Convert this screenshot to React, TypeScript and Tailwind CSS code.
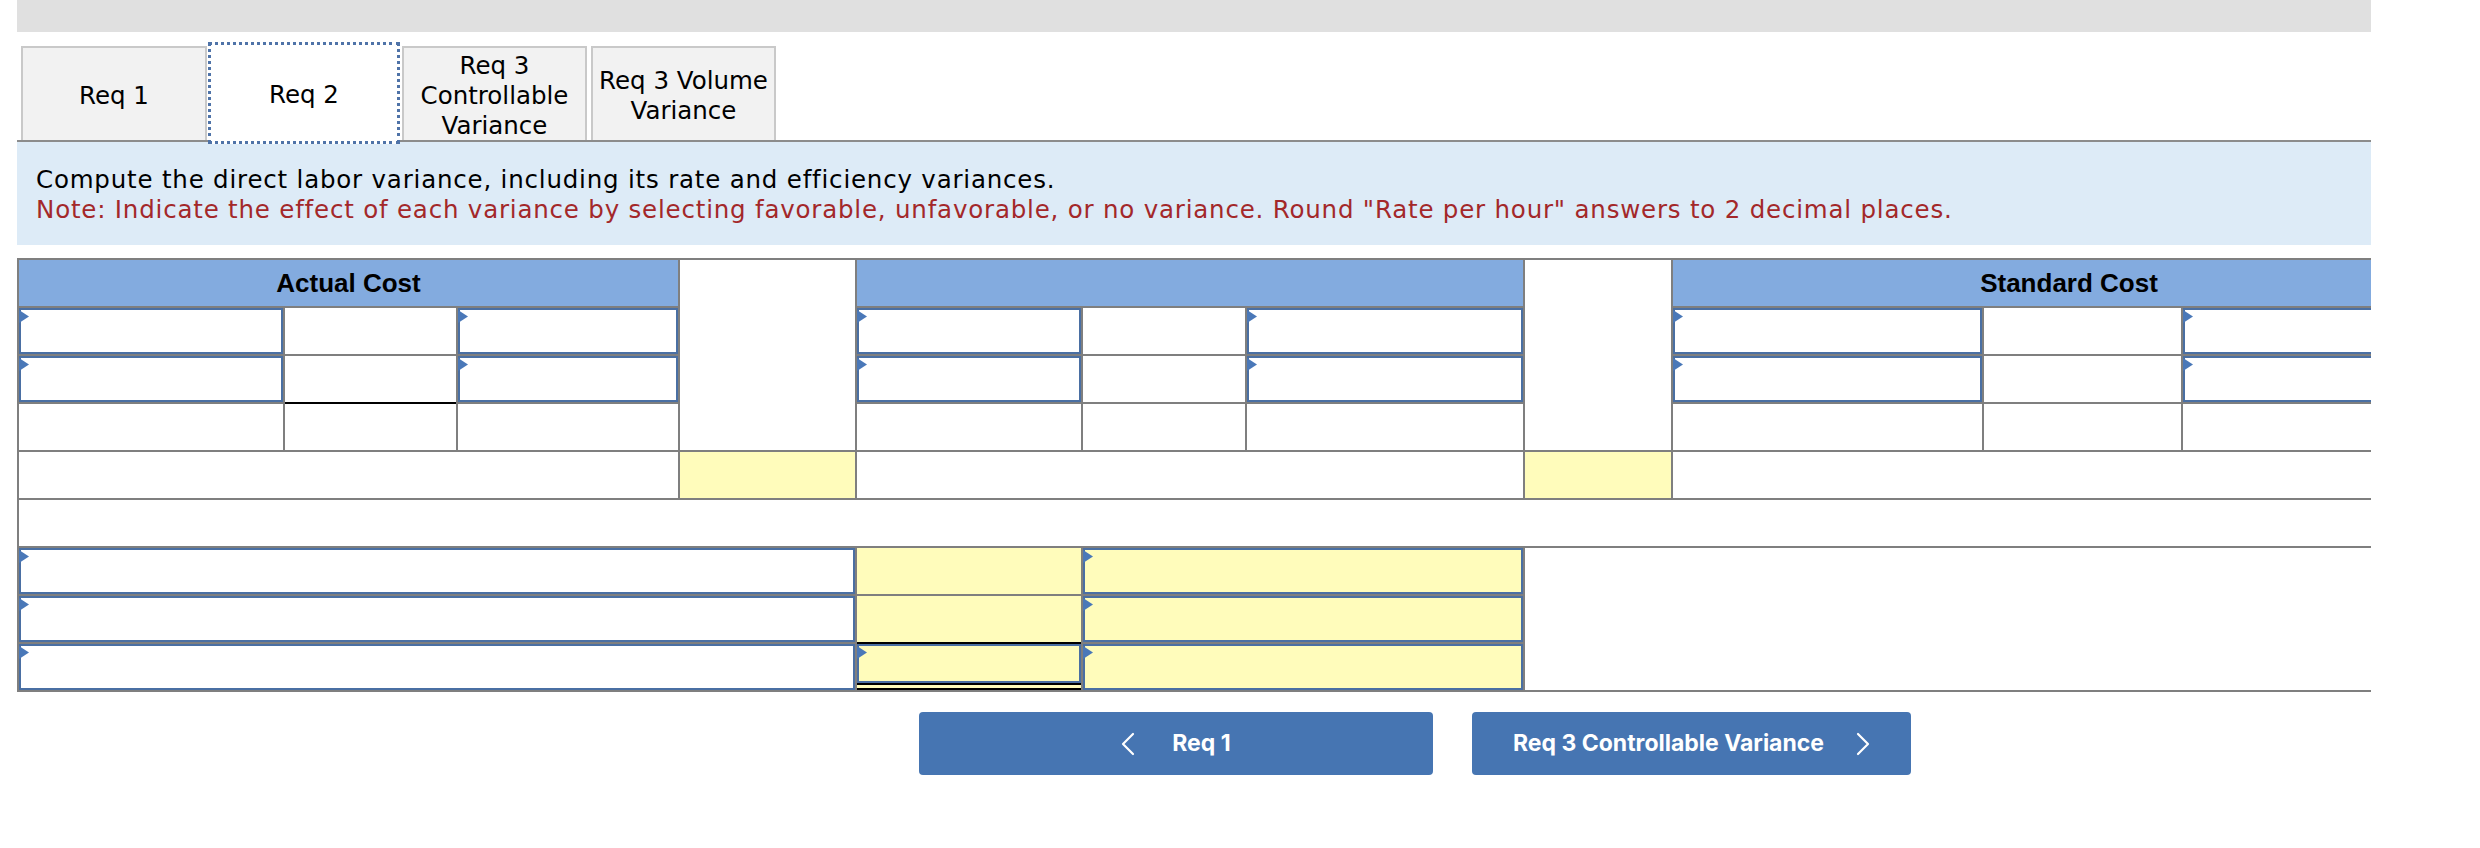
import React from "react";

const blue = "border-[#4a6fa3]";

const Marker = () => (
  <svg className="absolute -left-[2px] top-0" width="10" height="13" viewBox="0 0 10 13">
    <path d="M0 0 L10 6.5 L0 13 Z" fill="#4a78b8" />
  </svg>
);

const InputBox = ({ yellow = false }: { yellow?: boolean }) => (
  <div className={`relative h-full border-2 ${blue} ${yellow ? "bg-[#fffcbb]" : "bg-white"}`}>
    <Marker />
  </div>
);

const Chevron = ({ left = false }: { left?: boolean }) => (
  <svg width="14" height="24" viewBox="0 0 14 24" fill="none">
    <path
      d={left ? "M12 2 L2 12 L12 22" : "M2 2 L12 12 L2 22"}
      stroke="white"
      strokeWidth="2.2"
      strokeLinecap="round"
      strokeLinejoin="round"
    />
  </svg>
);

const Tab = ({ label, active = false, w }: { label: React.ReactNode; active?: boolean; w: string }) => {
  if (active) {
    return (
      <div
        className={`${w} relative z-10 -mb-[4px] flex h-[102px] items-center justify-center border-[3px] border-dotted border-[#4f73a8] bg-white pt-[3px] text-center`}
      >
        {label}
      </div>
    );
  }
  return (
    <div
      className={`${w} flex h-[94px] items-center justify-center border-2 border-b-0 border-[#c9c9c9] bg-[#f2f2f2] pt-[4px] text-center`}
    >
      {label}
    </div>
  );
};

const cell = "bg-white";
const yellow = "bg-[#fffcbb]";

export default function App() {
  return (
    <div className="min-h-[848px] w-[2480px] bg-white text-black" style={{ fontFamily: '"DejaVu Sans", Verdana, sans-serif' }}>
      <div className="ml-[17px] h-[32px] w-[2354px] bg-[#e0e0e0]" />

      {/* tabs */}
      <div className="ml-[21px] mt-[14px] flex h-[94px] items-end text-[24.5px] leading-[30px]">
        <Tab w="w-[186px]" label="Req 1" />
        <div className="ml-[1px]">
          <Tab w="w-[192px]" active label="Req 2" />
        </div>
        <div className="ml-[2px]">
          <Tab w="w-[185px]" label={<span>Req 3<br />Controllable<br />Variance</span>} />
        </div>
        <div className="ml-[4px]">
          <Tab w="w-[185px]" label={<span>Req 3 Volume<br />Variance</span>} />
        </div>
      </div>
      <div className="ml-[17px] h-[2px] w-[2354px] bg-[#8c8c8c]" />

      {/* instructions */}
      <div className="ml-[17px] flex h-[103px] w-[2354px] flex-col justify-center bg-[#ddebf7] pl-[19px] pt-[2px] text-[24.5px] leading-[30px] tracking-[0.8px]">
        <p>Compute the direct labor variance, including its rate and efficiency variances.</p>
        <p className="text-[#a3282a]">
          Note: Indicate the effect of each variance by selecting favorable, unfavorable, or no variance. Round "Rate per hour" answers to 2 decimal places.
        </p>
      </div>

      {/* worksheet */}
      <div className="ml-[17px] mt-[13px] w-[2354px] overflow-hidden">
        <div className="grid w-max grid-cols-[264px_171px_220px_175px_224px_162px_276px_146px_309px_197px_282px] grid-rows-[46px_46px_46px_46px_46px_46px_46px_46px_46px] gap-[2px] bg-[#7f7f7f] p-[2px]">
          {/* header */}
          <div
            className="col-span-3 flex items-center justify-center bg-[#83abdf] text-[26px] font-bold"
            style={{ fontFamily: '"Liberation Sans", Arial, sans-serif' }}
          >
            Actual Cost
          </div>
          <div className={`row-span-4 ${cell}`} />
          <div className="col-span-3 bg-[#83abdf]" />
          <div className={`row-span-4 ${cell}`} />
          <div
            className="col-span-3 flex items-center justify-center bg-[#83abdf] text-[26px] font-bold"
            style={{ fontFamily: '"Liberation Sans", Arial, sans-serif' }}
          >
            Standard Cost
          </div>

          {/* rows 1-2 */}
          {[0, 1].map((r) => (
            <React.Fragment key={r}>
              <InputBox />
              <div className={cell} />
              <InputBox />
              <InputBox />
              <div className={cell} />
              <InputBox />
              <InputBox />
              <div className={cell} />
              <InputBox />
            </React.Fragment>
          ))}

          {/* row 3 */}
          <div className={cell} />
          <div className={`${cell} shadow-[0_-2px_0_0_#000]`} />
          <div className={cell} />
          <div className={cell} />
          <div className={cell} />
          <div className={cell} />
          <div className={cell} />
          <div className={cell} />
          <div className={cell} />

          {/* totals */}
          <div className={`col-span-3 ${cell}`} />
          <div className={yellow} />
          <div className={`col-span-3 ${cell}`} />
          <div className={yellow} />
          <div className={`col-span-3 ${cell}`} />

          {/* spacer */}
          <div className={`col-span-11 ${cell}`} />

          {/* variances */}
          <div className="col-span-4">
            <InputBox />
          </div>
          <div className={yellow} />
          <div className="col-span-2">
            <InputBox yellow />
          </div>
          <div className={`col-span-4 row-span-3 ${cell}`} />

          <div className="col-span-4">
            <InputBox />
          </div>
          <div className={`${yellow} shadow-[0_2px_0_0_#000]`} />
          <div className="col-span-2">
            <InputBox yellow />
          </div>

          <div className="col-span-4">
            <InputBox />
          </div>
          <div className={`${yellow} flex flex-col`}>
            <div className="flex-1">
              <InputBox yellow />
            </div>
            <div className="h-[7px] border-y-2 border-black" />
          </div>
          <div className="col-span-2">
            <InputBox yellow />
          </div>
        </div>
      </div>

      {/* navigation */}
      <div
        className="ml-[919px] mt-[20px] flex gap-[39px] text-[23px] font-bold text-white"
        style={{ fontFamily: "Inter, Roboto, sans-serif" }}
      >
        <button className="flex h-[63px] w-[514px] items-center justify-center gap-[37px] rounded-[4px] bg-[#4675b2]">
          <Chevron left />
          <span>Req 1</span>
        </button>
        <button className="flex h-[63px] w-[439px] items-center justify-center gap-[32px] rounded-[4px] bg-[#4675b2]">
          <span>Req 3 Controllable Variance</span>
          <Chevron />
        </button>
      </div>
    </div>
  );
}
